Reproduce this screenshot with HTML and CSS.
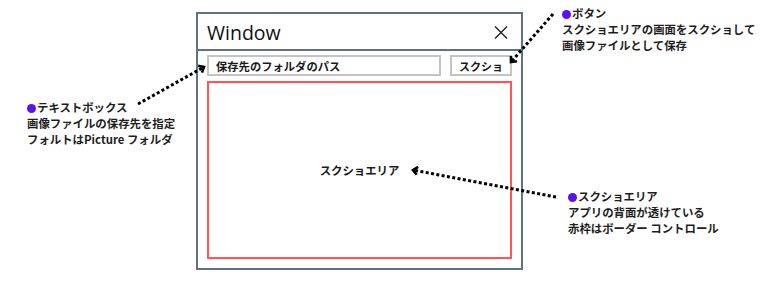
FILE: index.html
```html
<!DOCTYPE html>
<html lang="ja">
<head>
  <meta charset="UTF-8" />
  <title>Window</title>
  <link rel="stylesheet" href="styles.css">
</head>
<body>
  <div class="canvas">
    <div class="window">
      <div class="title-bar">
        <span class="title">Window</span>
        <svg class="close" width="14" height="13" viewBox="0 0 14 13">
          <path d="M1 0.5 L13 12.5 M13 0.5 L1 12.5" stroke="#222" stroke-width="1.4" fill="none"/>
        </svg>
      </div>
      <div class="content">
        <div class="toolbar">
          <div class="path-box">保存先のフォルダのパス</div>
          <div class="shot-button">スクショ</div>
        </div>
        <div class="shot-area">スクショエリア</div>
      </div>
    </div>

    <!-- annotations -->
    <div class="note note-textbox">
      <div><span class="dot"></span>テキストボックス</div>
      <div>画像ファイルの保存先を指定</div>
      <div>フォルトはPicture フォルダ</div>
    </div>
    <div class="note note-button">
      <div><span class="dot"></span>ボタン</div>
      <div>スクショエリアの画面をスクショして</div>
      <div>画像ファイルとして保存</div>
    </div>
    <div class="note note-area">
      <div><span class="dot"></span>スクショエリア</div>
      <div>アプリの背面が透けている</div>
      <div>赤枠はボーダー コントロール</div>
    </div>

    <svg class="arrows" width="768" height="281" viewBox="0 0 768 281">
      <defs>
        <marker id="head" markerWidth="10" markerHeight="10" refX="6" refY="5" orient="auto" markerUnits="userSpaceOnUse">
          <path d="M1.5 1 L6 5 L1.5 9" fill="none" stroke="#000" stroke-width="2.6"/>
        </marker>
      </defs>
      <line x1="138" y1="104" x2="204" y2="67" stroke="#000" stroke-width="3" stroke-dasharray="3 2.4" marker-end="url(#head)"/>
      <line x1="553" y1="14" x2="511" y2="62" stroke="#000" stroke-width="3" stroke-dasharray="3 2.4" marker-end="url(#head)"/>
      <line x1="556" y1="197" x2="413" y2="170" stroke="#000" stroke-width="3" stroke-dasharray="3 2.4" marker-end="url(#head)"/>
    </svg>
  </div>
</body>
</html>
```

FILE: styles.css
```css
body {
  margin: 0;
  background: #fff;
  font-family: "Noto Sans CJK JP", "Noto Sans", sans-serif;
  color: #1a1a1a;
}
.canvas {
  position: relative;
  width: 768px;
  height: 281px;
  overflow: hidden;
}
.window {
  position: absolute;
  left: 196px;
  top: 12px;
  width: 327px;
  height: 258px;
  box-sizing: border-box;
  border: 2px solid #5f7381;
  display: flex;
  flex-direction: column;
  background: #fff;
}
.title-bar {
  height: 35px;
  border-bottom: 2px solid #5f7381;
  display: flex;
  align-items: center;
  justify-content: space-between;
  padding: 0 13px 0 9px;
}
.title {
  font-family: "Open Sans", "Noto Sans", sans-serif;
  font-size: 19.5px;
  color: #111;
  margin-top: 1px;
}
.close {
  display: block;
  margin-top: 2px;
}
.content {
  flex: 1;
  display: flex;
  flex-direction: column;
  gap: 5px;
  padding: 4px 9px 9px 9px;
}
.toolbar {
  display: flex;
  gap: 9px;
  height: 21px;
}
.path-box,
.shot-button {
  box-sizing: border-box;
  border: 2px solid #c4c4c4;
  font-size: 11.3px;
  font-weight: 700;
  display: flex;
  align-items: center;
  height: 21px;
}
.path-box {
  flex: 1;
  padding-left: 7px;
}
.shot-button {
  width: 62px;
  justify-content: center;
  font-size: 11px;
}
.shot-area {
  flex: 1;
  border: 2px solid #f55;
  display: flex;
  align-items: center;
  justify-content: center;
  font-size: 11.4px;
  font-weight: 700;
}
.note {
  position: absolute;
  font-size: 11.4px;
  font-weight: 700;
  line-height: 16px;
  color: #1e1e1e;
  white-space: nowrap;
}
.note-textbox {
  left: 27px;
  top: 99px;
}
.note-button {
  left: 562px;
  top: 5px;
}
.note-area {
  left: 568px;
  top: 188px;
}
.dot {
  display: inline-block;
  width: 9px;
  height: 9px;
  border-radius: 50%;
  background: #5b12ee;
  margin-right: 1px;
  vertical-align: -1px;
}
.arrows {
  position: absolute;
  left: 0;
  top: 0;
}
```
